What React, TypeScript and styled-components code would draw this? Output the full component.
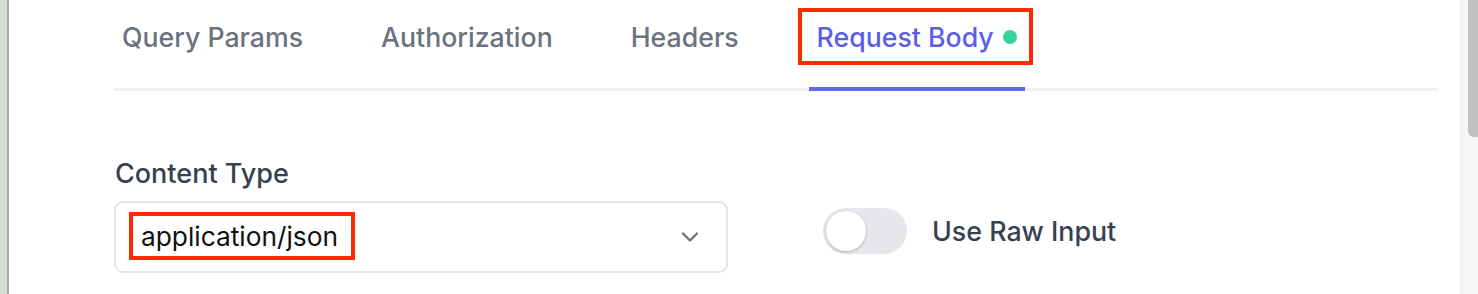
import styled, { createGlobalStyle } from "styled-components";

const GlobalStyle = createGlobalStyle`
    html, body {
        margin: 0;
        padding: 0;
        background: #ffffff;
    }
    body {
        font-family: Inter, "Noto Sans", "Liberation Sans", sans-serif;
        -webkit-font-smoothing: antialiased;
    }
`;

const tabs = ["Query Params", "Authorization", "Headers", "Request Body"];
const activeTab = "Request Body";

const App = () => {
    return (
        <>
            <GlobalStyle />
            <Frame>
                <SideStrip />
                <Main>
                    <TabList>
                        {tabs.map((t) => (
                            <Tab key={t} active={t === activeTab}>
                                {t === activeTab ? (
                                    <Marked box="-14px -16px -13px -19px">
                                        {t}
                                        <Dot />
                                    </Marked>
                                ) : (
                                    t
                                )}
                            </Tab>
                        ))}
                    </TabList>
                    <Section>
                        <FieldLabel>Content Type</FieldLabel>
                        <Row>
                            <Select>
                                <Marked box="-10px -17px -8px -12px">application/json</Marked>
                                <svg width="20" height="12" viewBox="0 0 20 12" fill="none">
                                    <path d="M3 2.5l7 7 7-7" stroke="#6b7280" strokeWidth="2.4" strokeLinecap="round" strokeLinejoin="round" />
                                </svg>
                            </Select>
                            <SwitchGroup>
                                <Toggle>
                                    <Knob />
                                </Toggle>
                                <ToggleText>Use Raw Input</ToggleText>
                            </SwitchGroup>
                        </Row>
                    </Section>
                </Main>
                <ScrollTrack>
                    <ScrollThumb />
                </ScrollTrack>
            </Frame>
        </>
    );
};
export default App;

const Frame = styled.div`
    display: flex;
    width: 1478px;
    height: 294px;
    overflow: hidden;
`;

const SideStrip = styled.div`
    width: 7px;
    background: #d4ddd2;
    border-right: 2px solid #a2aaa1;
`;

const Main = styled.div`
    flex: 1;
    padding: 0 23px 0 105px;
`;

const TabList = styled.div`
    display: flex;
    gap: 62px;
    border-bottom: 3px solid #eef0f2;
`;

const Tab = styled.div<{ active: boolean }>`
    display: flex;
    align-items: center;
    height: 30px;
    padding: 22px 8px 35px;
    margin-bottom: -3px;
    font-size: 26.7px;
    font-weight: 500;
    line-height: 30px;
    color: ${({ active }) => (active ? "#5b5ee6" : "#6b7280")};
    border-bottom: 4px solid ${({ active }) => (active ? "#6366f1" : "transparent")};
`;

const Marked = styled.span<{ box: string }>`
    position: relative;
    display: inline-flex;
    align-items: center;
    &::after {
        content: "";
        position: absolute;
        inset: ${({ box }) => box};
        border: 4px solid #ff2a00;
        pointer-events: none;
    }
`;

const Dot = styled.span`
    width: 14px;
    height: 14px;
    border-radius: 50%;
    background: #34d399;
    margin-left: 9px;
`;

const Section = styled.div`
    padding-top: 68px;
`;

const FieldLabel = styled.div`
    height: 30px;
    line-height: 30px;
    padding-left: 1px;
    font-size: 27px;
    font-weight: 500;
    color: #374151;
    margin-bottom: 12px;
`;

const Row = styled.div`
    display: flex;
    align-items: flex-start;
`;

const Select = styled.div`
    box-sizing: border-box;
    width: 614px;
    height: 72px;
    display: flex;
    align-items: center;
    justify-content: space-between;
    padding: 0 26px 0 25px;
    border: 2px solid #e3e5e8;
    border-radius: 9px;
    font-size: 26.3px;
    line-height: 30px;
    color: #111111;
`;

const SwitchGroup = styled.div`
    display: flex;
    align-items: center;
    margin: 7px 0 0 95px;
`;

const Toggle = styled.div`
    box-sizing: border-box;
    width: 84px;
    height: 46px;
    padding: 3px;
    border-radius: 23px;
    background: #e5e7eb;
    display: flex;
    align-items: center;
`;

const Knob = styled.div`
    width: 40px;
    height: 40px;
    border-radius: 50%;
    background: #ffffff;
    box-shadow: 0 1px 3px rgba(0, 0, 0, 0.25);
`;

const ToggleText = styled.div`
    margin-left: 25px;
    font-size: 26.8px;
    font-weight: 500;
    color: #374151;
`;

const ScrollTrack = styled.div`
    width: 17px;
    background: #f6f6f6;
    border-left: 1px solid #ebebeb;
    display: flex;
    justify-content: flex-end;
`;

const ScrollThumb = styled.div`
    width: 10px;
    height: 137px;
    background: #c1c1c1;
    border-radius: 0 0 0 6px;
`;
